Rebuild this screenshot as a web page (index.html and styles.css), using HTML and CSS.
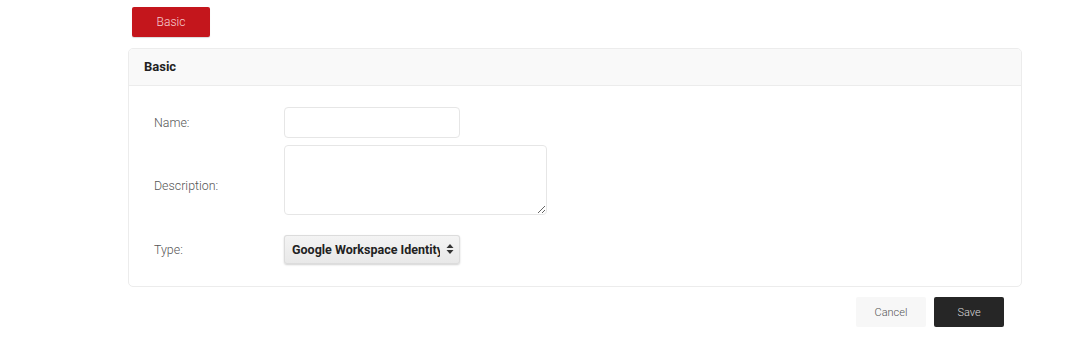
FILE: index.html
```html
<!DOCTYPE html>
<html lang="en">
<head>
  <meta charset="UTF-8">
  <meta name="viewport" content="width=device-width, initial-scale=1.0">
  <title>Basic</title>
  <link rel="stylesheet" href="styles.css">
</head>
<body>
  <div class="page">
    <div class="tabs">
      <button type="button" class="tab active">Basic</button>
    </div>

    <div class="card">
      <div class="card-header">Basic</div>
      <form class="card-body" id="basicForm">
        <div class="form-row">
          <label for="name">Name:</label>
          <input type="text" id="name" name="name">
        </div>
        <div class="form-row row-desc">
          <label for="description">Description:</label>
          <textarea id="description" name="description"></textarea>
        </div>
        <div class="form-row">
          <label for="type">Type:</label>
          <div class="select-wrap">
            <select id="type" name="type">
              <option>Google Workspace Identity</option>
            </select>
            <svg class="select-arrows" width="8" height="12" viewBox="0 0 8 12">
              <path d="M4 1 L7.5 5 L0.5 5 Z M4 11 L7.5 7 L0.5 7 Z" fill="#333"/>
            </svg>
          </div>
        </div>
      </form>
    </div>

    <div class="actions">
      <button type="button" class="btn btn-cancel">Cancel</button>
      <button type="submit" form="basicForm" class="btn btn-save">Save</button>
    </div>
  </div>
</body>
</html>
```

FILE: styles.css
```css
/* Mise en page */
body {
  margin: 0;
  font-family: Roboto, "Liberation Sans", sans-serif;
  color: #333;
  background: #fff;
}

.page {
  width: 894px;
  margin-left: 128px;
  padding-top: 7px;
}

.tabs {
  padding-left: 4px;
  margin-bottom: 11px;
}

.tab {
  width: 78px;
  height: 30px;
  border: none;
  border-radius: 2px;
  font-family: inherit;
  font-size: 12px;
  font-weight: 300;
  cursor: pointer;
}

.tab.active {
  background-color: #c4161c;
  color: #f6d0d2;
  box-shadow: 0 1px 1px rgba(0, 0, 0, 0.15);
}

.card {
  border: 1px solid #ececec;
  border-radius: 5px;
  overflow: hidden;
}

.card-header {
  height: 36px;
  line-height: 36px;
  padding-left: 15px;
  background-color: #f9f9f9;
  border-bottom: 1px solid #ececec;
  font-size: 13px;
  font-weight: bold;
  color: #222;
}

.card-body {
  padding: 21px 25px 22px 25px;
  margin: 0;
}

.form-row {
  display: flex;
  align-items: center;
  margin-bottom: 7px;
}

.form-row.row-desc {
  margin-bottom: 20px;
}

.form-row label {
  width: 130px;
  font-size: 12.4px;
  font-weight: 300;
  color: #555;
}

.row-desc label {
  padding-top: 11px;
}

.form-row:last-child {
  margin-bottom: 0;
}

.form-row input,
.form-row textarea {
  box-sizing: border-box;
  border: 1px solid #e6e6e6;
  border-radius: 4px;
  font-family: inherit;
  font-size: 12px;
  outline: none;
}

.form-row input {
  width: 176px;
  height: 31px;
  padding: 5px 8px;
}

.form-row textarea {
  width: 263px;
  height: 70px;
  padding: 5px 8px;
  resize: vertical;
}

.select-wrap {
  position: relative;
  width: 176px;
  height: 29px;
}

.select-wrap select {
  appearance: none;
  -webkit-appearance: none;
  box-sizing: border-box;
  width: 176px;
  height: 29px;
  padding: 0 20px 0 8px;
  border: none;
  border-radius: 3px;
  background: linear-gradient(#f4f4f4, #e8e8e8);
  box-shadow: inset 0 0 0 1px #dcdcdc, 0 1px 2px rgba(0, 0, 0, 0.18);
  font-family: inherit;
  font-size: 12.5px;
  font-weight: bold;
  color: #222;
  outline: none;
}

.select-arrows {
  position: absolute;
  right: 6px;
  top: 8px;
  pointer-events: none;
}

.actions {
  display: flex;
  justify-content: flex-end;
  gap: 8px;
  margin-top: 10px;
  padding-right: 18px;
}

.btn {
  width: 70px;
  height: 30px;
  border: none;
  border-radius: 2px;
  font-family: inherit;
  font-size: 11px;
  font-weight: 300;
  cursor: pointer;
}

.btn-cancel {
  background-color: #f7f7f7;
  color: #555;
}

.btn-save {
  background-color: #262626;
  color: #ddd;
}
```
